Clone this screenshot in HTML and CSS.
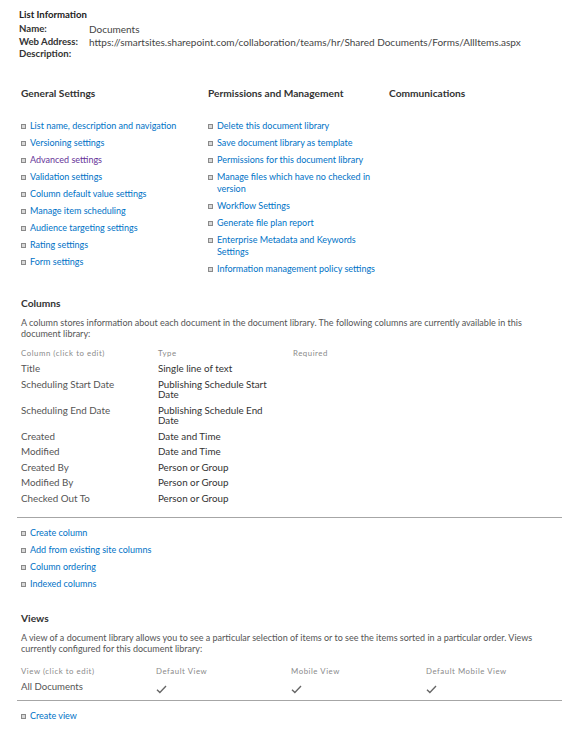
FILE: index.html
```html
<!DOCTYPE html>
<html>
<head>
<meta charset="utf-8">
<link rel="stylesheet" href="styles.css">
</head>
<body>
<div class="page">
  <section class="info">
    <h2 class="info-title">List Information</h2>
    <div class="info-row"><span class="info-label">Name:</span><span class="info-value">Documents</span></div>
    <div class="info-row"><span class="info-label">Web Address:</span><span class="info-value">https://smartsites.sharepoint.com/collaboration/teams/hr/Shared Documents/Forms/AllItems.aspx</span></div>
    <div class="info-row"><span class="info-label">Description:</span><span class="info-value"></span></div>
  </section>

  <section class="settings">
    <div class="settings-col col-general">
      <h3 class="col-title">General Settings</h3>
      <ul class="links">
        <li><a href="#">List name, description and navigation</a></li>
        <li><a href="#">Versioning settings</a></li>
        <li><a href="#" class="visited">Advanced settings</a></li>
        <li><a href="#">Validation settings</a></li>
        <li><a href="#">Column default value settings</a></li>
        <li><a href="#">Manage item scheduling</a></li>
        <li><a href="#">Audience targeting settings</a></li>
        <li><a href="#">Rating settings</a></li>
        <li><a href="#">Form settings</a></li>
      </ul>
    </div>
    <div class="settings-col col-perm">
      <h3 class="col-title">Permissions and Management</h3>
      <ul class="links">
        <li><a href="#">Delete this document library</a></li>
        <li><a href="#">Save document library as template</a></li>
        <li><a href="#">Permissions for this document library</a></li>
        <li><a href="#">Manage files which have no checked in version</a></li>
        <li><a href="#">Workflow Settings</a></li>
        <li><a href="#">Generate file plan report</a></li>
        <li><a href="#">Enterprise Metadata and Keywords Settings</a></li>
        <li><a href="#">Information management policy settings</a></li>
      </ul>
    </div>
    <div class="settings-col col-comm">
      <h3 class="col-title">Communications</h3>
    </div>
  </section>

  <section class="block columns">
    <h3 class="block-title">Columns</h3>
    <p class="block-desc">A column stores information about each document in the document library. The following columns are currently available in this document library:</p>
    <table class="grid col-grid">
      <thead>
        <tr><th class="c1">Column (click to edit)</th><th class="c2">Type</th><th class="c3">Required</th></tr>
      </thead>
      <tbody>
        <tr><td>Title</td><td>Single line of text</td><td></td></tr>
        <tr><td>Scheduling Start Date</td><td>Publishing Schedule Start Date</td><td></td></tr>
        <tr><td>Scheduling End Date</td><td>Publishing Schedule End Date</td><td></td></tr>
        <tr><td>Created</td><td>Date and Time</td><td></td></tr>
        <tr><td>Modified</td><td>Date and Time</td><td></td></tr>
        <tr><td>Created By</td><td>Person or Group</td><td></td></tr>
        <tr><td>Modified By</td><td>Person or Group</td><td></td></tr>
        <tr><td>Checked Out To</td><td>Person or Group</td><td></td></tr>
      </tbody>
    </table>
    <hr class="rule">
    <ul class="links after">
      <li><a href="#">Create column</a></li>
      <li><a href="#">Add from existing site columns</a></li>
      <li><a href="#">Column ordering</a></li>
      <li><a href="#">Indexed columns</a></li>
    </ul>
  </section>

  <section class="block views">
    <h3 class="block-title">Views</h3>
    <p class="block-desc">A view of a document library allows you to see a particular selection of items or to see the items sorted in a particular order. Views currently configured for this document library:</p>
    <table class="grid view-grid">
      <thead>
        <tr><th class="v1">View (click to edit)</th><th class="v2">Default View</th><th class="v3">Mobile View</th><th class="v4">Default Mobile View</th></tr>
      </thead>
      <tbody>
        <tr>
          <td>All Documents</td>
          <td><svg class="check" viewBox="0 0 12 10" width="11" height="9"><path d="M1 5.2 L4.2 8.4 L11 1.2" fill="none" stroke="#666" stroke-width="1.5"/></svg></td>
          <td><svg class="check" viewBox="0 0 12 10" width="11" height="9"><path d="M1 5.2 L4.2 8.4 L11 1.2" fill="none" stroke="#666" stroke-width="1.5"/></svg></td>
          <td><svg class="check" viewBox="0 0 12 10" width="11" height="9"><path d="M1 5.2 L4.2 8.4 L11 1.2" fill="none" stroke="#666" stroke-width="1.5"/></svg></td>
        </tr>
      </tbody>
    </table>
    <hr class="rule">
    <ul class="links after">
      <li><a href="#">Create view</a></li>
    </ul>
  </section>
</div>
</body>
</html>
```

FILE: styles.css
```css
html, body {
  margin: 0;
  padding: 0;
  background: #ffffff;
}
body {
  font-family: "Lato", "Liberation Sans", sans-serif;
  font-size: 9px;
  color: #444444;
}
.page {
  padding: 9px 6px 0 17px;
}
h2, h3, p, ul {
  margin: 0;
  padding: 0;
}
.info {
  padding-left: 2px;
}
.info-title {
  font-size: 9.6px;
  font-weight: 700;
  color: #222;
  line-height: 12px;
  margin-bottom: 2px;
}
.info-row {
  display: flex;
  line-height: 12.5px;
  font-size: 10px;
}
.info-label {
  width: 70px;
  font-size: 9.6px;
  font-weight: 700;
  color: #333;
}
.info-value {
  color: #444;
}
.settings {
  display: flex;
  margin-top: 26px;
  padding-left: 4px;
}
.settings-col {
  display: flex;
  flex-direction: column;
}
.col-general { width: 187px; }
.col-perm { width: 181px; }
.col-comm { flex: 1; }
.col-title {
  font-size: 10.2px;
  font-weight: 700;
  color: #333;
  line-height: 12px;
  margin-bottom: 21px;
}
.links {
  list-style: none;
  display: flex;
  flex-direction: column;
  gap: 5px;
}
.links li {
  display: flex;
  align-items: flex-start;
  line-height: 12px;
}
.links li::before {
  content: "";
  flex: none;
  width: 3px;
  height: 3px;
  border: 1px solid #8a8a8a;
  background: #d8d8d8;
  margin: 4px 4px 0 0;
}
.col-perm .links li a {
  max-width: 160px;
}
a {
  color: #0072c6;
  text-decoration: none;
}
a.visited {
  color: #663399;
}
.block {
  margin-top: 22px;
}
.block-title {
  font-size: 10.2px;
  font-weight: 700;
  color: #333;
  line-height: 12px;
  padding-left: 4px;
  margin-bottom: 8px;
}
.block-desc {
  padding-left: 4px;
  line-height: 11px;
  color: #555;
  max-width: 534px;
  margin-bottom: 9px;
}
.views .block-desc {
  margin-bottom: 12px;
}
.grid {
  border-collapse: collapse;
  table-layout: fixed;
  margin-left: 4px;
}
.grid th {
  font-size: 7.8px;
  font-weight: 400;
  color: #8a8a8a;
  text-align: left;
  padding: 0 0 3px 0;
  line-height: 10px;
  letter-spacing: 0.55px;
}
.grid td {
  vertical-align: top;
  padding: 2.5px 0;
  line-height: 10.5px;
}
.col-grid td {
  font-size: 9.8px;
}
.col-grid .c1 { width: 137px; }
.col-grid .c2 { width: 135px; }
.col-grid .c3 { width: 80px; }
.col-grid td:nth-child(1) { color: #555; }
.col-grid td:nth-child(2) { color: #333; padding-right: 12px; }
.view-grid .v1, .view-grid .v2, .view-grid .v3 { width: 135px; }
.view-grid .v4 { width: 130px; }
.view-grid td { padding: 3px 0 2px; font-size: 9.6px; color: #555; }
.check { display: block; margin-top: 3px; }
.rule {
  border: 0;
  border-top: 1px solid #a6a6a6;
  margin: 11px 0 9px 0;
}
.after {
  padding-left: 4px;
}
.views .rule { margin-top: 4px; }
```
